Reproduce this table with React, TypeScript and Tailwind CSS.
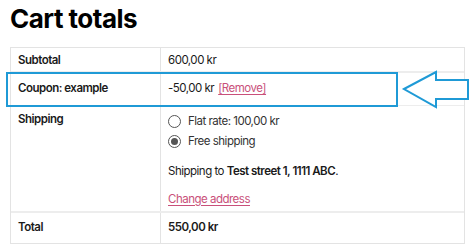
import React from 'react';

const Radio: React.FC<{ checked?: boolean }> = ({ checked }) => (
  <span className="w-[13px] h-[13px] rounded-full border border-[#555] flex items-center justify-center shrink-0">
    {checked && <span className="w-[7px] h-[7px] rounded-full bg-[#555]" />}
  </span>
);

const App: React.FC = () => {
  return (
    <div className="relative w-[474px] h-[248px] bg-white px-[10px] overflow-hidden text-[#1a1a1a] font-['Inter',sans-serif]">
      <h1 className="h-[47px] pt-[3px] text-[26px] leading-[32px] font-bold tracking-[-0.5px] text-black">
        Cart totals
      </h1>

      {/* totals table */}
      <div className="w-[455px] border border-[#e3e3e3] text-[11.5px] tracking-[-0.5px]">
        <div className="grid grid-cols-[150px_1fr] h-[25px] border-b-2 border-[#ededed]">
          <div className="pl-[7px] pt-[2px] flex items-center font-semibold border-r border-[#e3e3e3]">Subtotal</div>
          <div className="pl-[7px] pt-[2px] flex items-center">600,00 kr</div>
        </div>
        <div className="grid grid-cols-[150px_1fr] h-[33px] border-b border-[#ededed]">
          <div className="pl-[7px] flex items-center font-semibold border-r border-[#e3e3e3]">Coupon: example</div>
          <div className="pl-[7px] flex items-center gap-[4px]">
            <span>-50,00 kr</span>
            <a className="text-[#c9507a] underline underline-offset-2">[Remove]</a>
          </div>
        </div>
        <div className="grid grid-cols-[150px_1fr] h-[107px] border-b-2 border-[#ededed]">
          <div className="pl-[7px] pt-[5px] font-semibold border-r border-[#e3e3e3]">Shipping</div>
          <div className="pl-[7px] pt-[8px] flex flex-col">
            <div className="flex items-center gap-[7px] h-[15px]">
              <Radio />
              <span className="text-[#333]">Flat rate: 100,00 kr</span>
            </div>
            <div className="flex items-center gap-[7px] h-[15px] mt-[5px]">
              <Radio checked />
              <span className="text-[#333]">Free shipping</span>
            </div>
            <div className="mt-[15px] h-[15px] flex items-center">
              Shipping to&nbsp;<b className="font-semibold">Test street 1, 1111 ABC</b>.
            </div>
            <a className="mt-[13px] h-[15px] flex items-center text-[#c9507a] underline underline-offset-2">
              Change address
            </a>
          </div>
        </div>
        <div className="grid grid-cols-[150px_1fr] h-[30px]">
          <div className="pl-[7px] flex items-center font-semibold border-r border-[#e3e3e3]">Total</div>
          <div className="pl-[7px] flex items-center font-semibold">550,00 kr</div>
        </div>
      </div>

      {/* highlight around the coupon row */}
      <div className="absolute left-[6px] top-[72px] w-[392px] h-[35px] border-2 border-[#1f9ad6]" />

      {/* pointer arrow */}
      <svg className="absolute left-0 top-0" width="474" height="248" viewBox="0 0 474 248">
        <polygon
          points="404,89 436,72 436,80 468,80 468,99 436,99 436,107"
          fill="white"
          stroke="#1f9ad6"
          strokeWidth="2"
          strokeLinejoin="miter"
        />
      </svg>
    </div>
  );
};

export default App;
